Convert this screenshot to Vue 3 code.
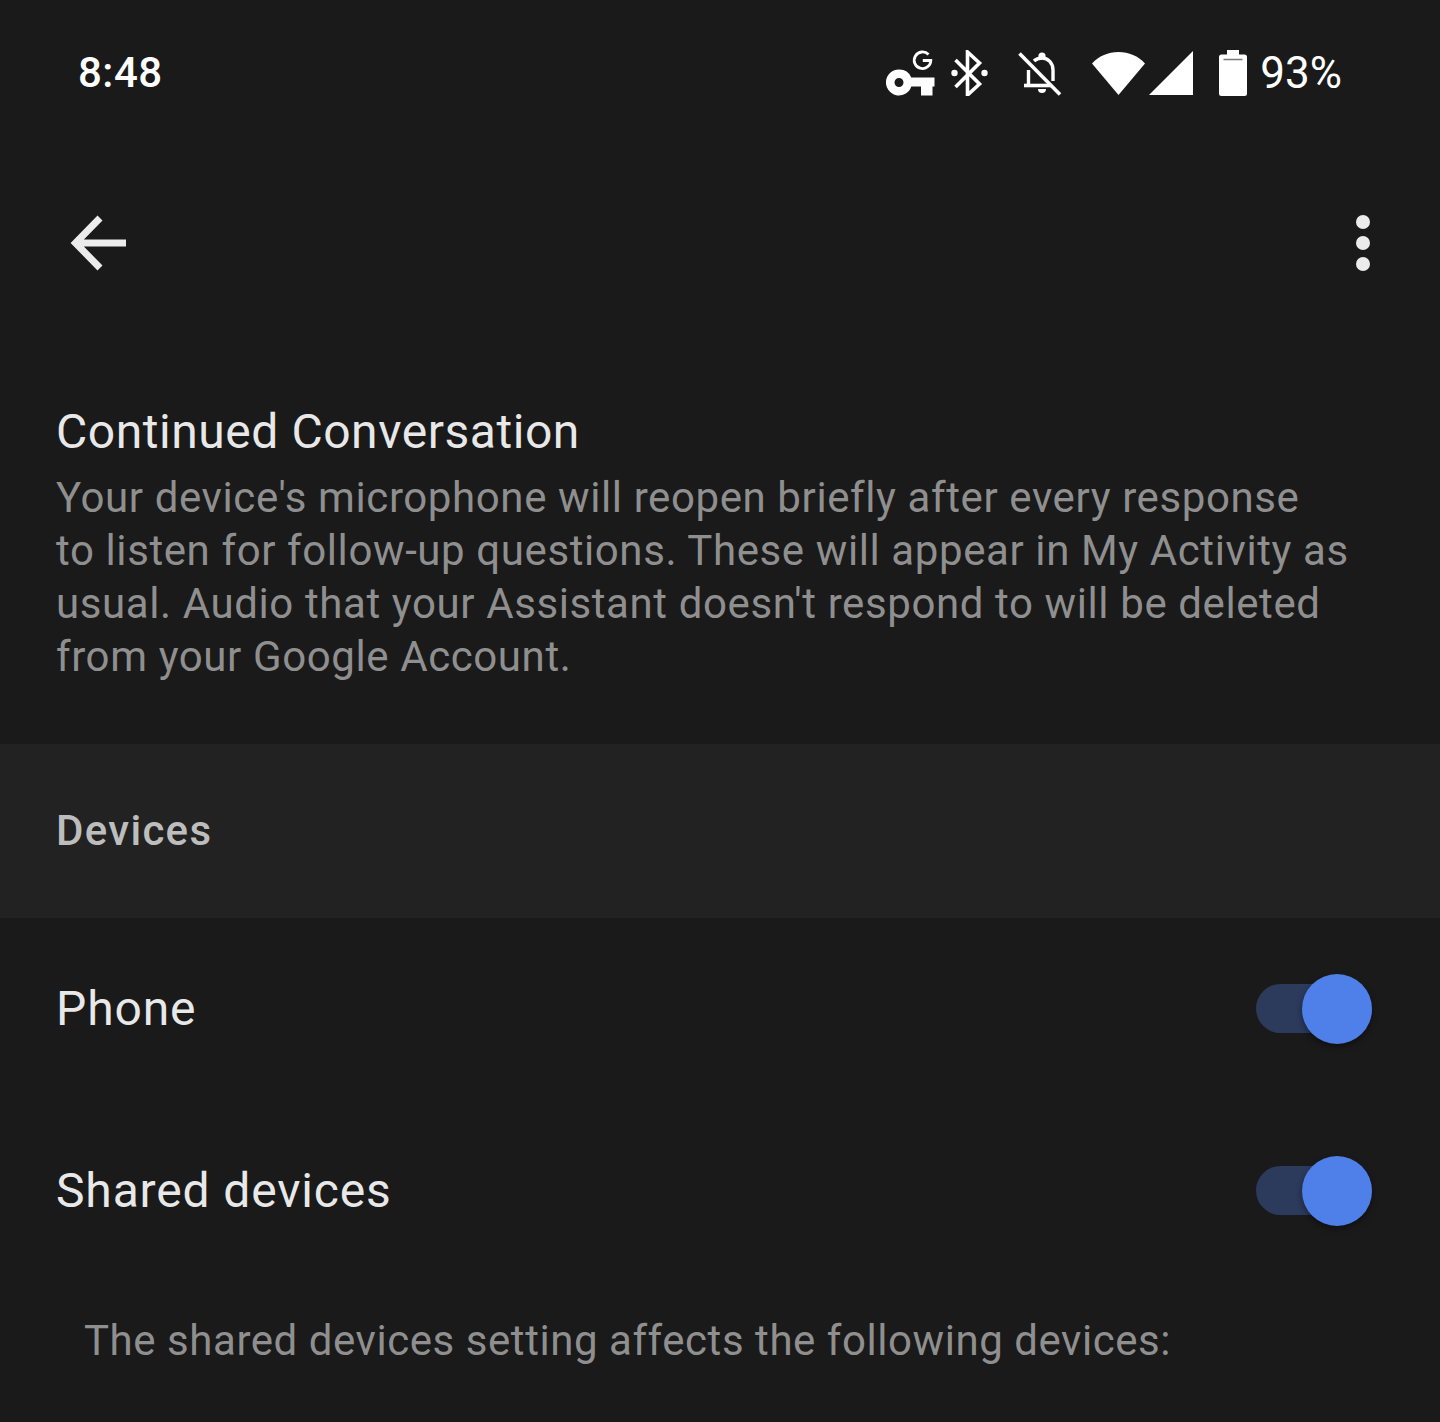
<script setup>
const rows = ['Phone', 'Shared devices']
</script>

<template>
  <div class="screen">
    <header class="statusBar">
      <span class="time">8:48</span>
      <div class="statusIcons">
        <svg class="vpn" width="50" height="50" viewBox="0 0 50 50">
          <path d="M13 21.500a13 13 0 1 0 12.300 17H35V47.500h11.500V38.500h2V29.500H25.300A13 13 0 0 0 13 21.500zm0 8.500a4.500 4.500 0 1 1 0 9 4.500 4.500 0 0 1 0-9z" fill="#fff" fill-rule="evenodd"/>
          <path d="M42.500 6.500A8.300 8.300 0 1 0 44.800 12.500h-8" fill="none" stroke="#fff" stroke-width="2.800"/>
        </svg>
        <svg class="bt" width="38" height="46" viewBox="0 0 38 46">
          <path d="M4.500 10l24 24-12 11V2l12 11-24 24" fill="none" stroke="#fff" stroke-width="3.600"/>
          <circle cx="3.500" cy="23" r="3.200" fill="#fff"/>
          <circle cx="33.500" cy="23" r="3.200" fill="#fff"/>
        </svg>
        <svg class="bell" width="44" height="46" viewBox="0 0 44 46">
          <path d="M10.500 20v15M35 31V20c0-7-5-12-11-12-3 0-6 1-8 3" fill="none" stroke="#fff" stroke-width="3.400"/>
          <path d="M6 35.500h28" fill="none" stroke="#fff" stroke-width="3.600"/>
          <path d="M1.500 3.500l40.500 41" fill="none" stroke="#fff" stroke-width="3.600"/>
          <circle cx="24" cy="6" r="3.600" fill="#fff"/>
          <path d="M20 39h8a4 4 0 0 1-8 0z" fill="#fff"/>
        </svg>
        <svg class="wifi" width="53" height="44" viewBox="0 0 53 44">
          <path d="M0 12.500C7 5 16 1 26.500 1S46 5 53 12.500L26.500 44z" fill="#fff"/>
        </svg>
        <svg class="signal" width="44" height="44" viewBox="0 0 44 44">
          <path d="M44 0v44H0z" fill="#fff"/>
        </svg>
        <svg class="battery" width="28" height="46" viewBox="0 0 28 46">
          <path d="M8 0h12v4.500h5.500A2.500 2.500 0 0 1 28 7v36.500a2.500 2.500 0 0 1-2.500 2.500h-23A2.500 2.500 0 0 1 0 43.500V7a2.500 2.500 0 0 1 2.500-2.500H8z" fill="#fff"/>
          <path d="M4.500 9.500h19" stroke="#777" stroke-width="1.500"/>
        </svg>
        <span class="percent">93%</span>
      </div>
    </header>

    <nav class="toolbar">
      <svg width="58" height="58" viewBox="0 0 58 58">
        <path d="M57 29H7M31 4L6.500 29 31 54" fill="none" stroke="#ececec" stroke-width="7"/>
      </svg>
      <div class="menu"><i></i><i></i><i></i></div>
    </nav>

    <section class="intro">
      <h1>Continued Conversation</h1>
      <p>Your device's microphone will reopen briefly after every response<br>to listen for follow-up questions. These will appear in My Activity as<br>usual. Audio that your Assistant doesn't respond to will be deleted<br>from your Google Account.</p>
    </section>

    <div class="sectionHead">Devices</div>

    <div class="row" v-for="row in rows" :key="row">
      <span>{{ row }}</span>
      <div class="switch"><div class="knob"></div></div>
    </div>

    <p class="note">The shared devices setting affects the following devices:</p>
  </div>
</template>

<style scoped>
.screen {
  width: 1440px;
  height: 1422px;
  overflow: hidden;
  background: #1a1a1a;
  color: #ececec;
  font-family: Roboto, sans-serif;
}

.statusBar {
  height: 145px;
  padding: 0 98px 0 78px;
  box-sizing: border-box;
  display: flex;
  align-items: center;
  justify-content: space-between;
  color: #fff;
}

.time {
  font-size: 42px;
  font-weight: 500;
  letter-spacing: 0.5px;
}

.statusIcons {
  display: flex;
  align-items: center;
}

.bt { margin-left: 15px; }
.bell { margin-left: 29px; }
.wifi { margin-left: 30px; }
.signal { margin-left: 4px; }
.battery { margin-left: 26px; }

.percent {
  margin-left: 13px;
  font-size: 44px;
}

.toolbar {
  height: 196px;
  padding: 0 70px 0 69px;
  box-sizing: border-box;
  display: flex;
  align-items: center;
  justify-content: space-between;
}

.menu {
  display: flex;
  flex-direction: column;
  gap: 7px;
}

.menu i {
  display: block;
  width: 14px;
  height: 14px;
  border-radius: 50%;
  background: #ececec;
}

.intro {
  height: 403px;
  padding: 64px 0 0 56px;
  box-sizing: border-box;
}

.intro h1 {
  margin: 0;
  font-size: 48px;
  font-weight: 400;
  line-height: 53px;
  letter-spacing: 0.55px;
  color: #e8e8e8;
}

.intro p {
  margin: 13px 0 0;
  font-size: 42px;
  line-height: 53px;
  letter-spacing: 0.6px;
  white-space: nowrap;
  color: #8f8f8f;
}

.sectionHead {
  height: 172px;
  padding: 0 0 2px 56px;
  display: flex;
  align-items: center;
  background: #222;
  color: #bdbdbd;
  font-size: 42px;
  font-weight: 500;
  letter-spacing: 1.3px;
}

.row {
  height: 182px;
  padding: 0 68px 2px 56px;
  box-sizing: border-box;
  display: flex;
  align-items: center;
  justify-content: space-between;
  font-size: 48px;
  letter-spacing: 0.85px;
  color: #e8e8e8;
}

.switch {
  position: relative;
  width: 116px;
  height: 49px;
  border-radius: 25px;
  background: #2c3a5c;
}

.knob {
  position: absolute;
  right: 0;
  top: -10px;
  width: 70px;
  height: 70px;
  border-radius: 50%;
  background: #4f7fe8;
  box-shadow: 0 3px 6px rgba(0, 0, 0, 0.4);
}

.note {
  margin: 32px 0 0 84px;
  font-size: 42px;
  line-height: 53px;
  letter-spacing: 0.55px;
  color: #8f8f8f;
}
</style>
